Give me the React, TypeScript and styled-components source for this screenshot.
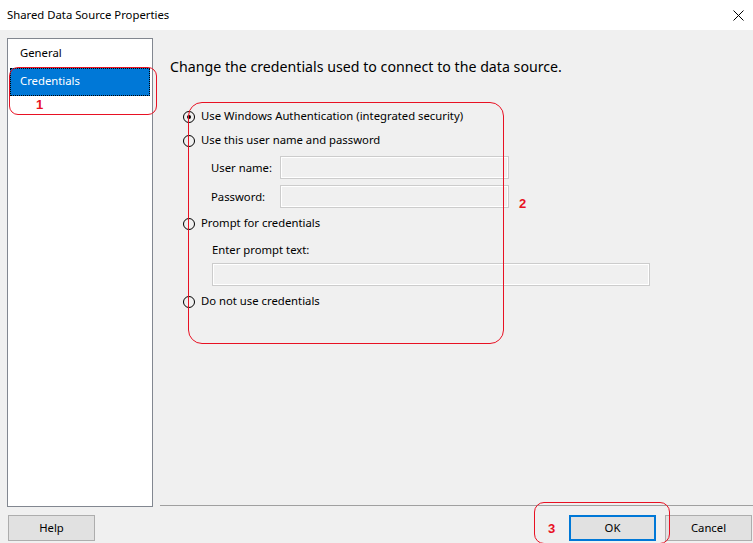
import React from "react";
import styled, { createGlobalStyle } from "styled-components";

const Global = createGlobalStyle`
  html, body { margin: 0; padding: 0; background: #f0f0f0; }
  body { font-family: "Noto Sans", "Open Sans", sans-serif; font-size: 11.3px; color: #000; }
  * { box-sizing: border-box; }
`;

const Window = styled.div`
  position: relative;
  width: 753px;
  height: 543px;
  display: flex;
  flex-direction: column;
  background: #f0f0f0;
  overflow: hidden;
`;

const TitleBar = styled.div`
  height: 30px;
  flex: none;
  background: #fff;
  display: flex;
  align-items: center;
  justify-content: space-between;
  padding: 0 9px 0 7px;
`;

const Title = styled.span`
  font-size: 11.3px;
  line-height: 16px;
`;

const Main = styled.div`
  flex: 1;
  display: flex;
  min-height: 0;
`;

const NavList = styled.ul`
  list-style: none;
  margin: 8px 0 0 7px;
  padding: 1px 2px 0 2px;
  width: 146px;
  height: 469px;
  flex: none;
  background: #fff;
  border: 1px solid #828790;
`;

const NavItem = styled.li<{ $active?: boolean }>`
  height: 28px;
  display: flex;
  align-items: center;
  padding: 0 0 3px 10px;
  font-size: 11.3px;
  color: ${(p) => (p.$active ? "#fff" : "#000")};
  background: ${(p) => (p.$active ? "#0078d7" : "transparent")};
  outline: ${(p) => (p.$active ? "1px dotted #000" : "none")};
  outline-offset: -1px;
`;

const Pane = styled.div`
  flex: 1;
  display: flex;
  flex-direction: column;
  margin-left: 7px;
`;

const Content = styled.div`
  flex: 1;
  padding: 27px 0 0 10px;
`;

const Heading = styled.h1`
  margin: 0;
  font-weight: normal;
  font-size: 14.2px;
  line-height: 20px;
`;

const Options = styled.div`
  display: flex;
  flex-direction: column;
  padding: 27px 0 0 13px;
`;

const RadioRow = styled.label<{ $mt?: number }>`
  display: flex;
  align-items: center;
  height: 24px;
  margin-top: ${(p) => p.$mt ?? 0}px;
  gap: 6px;
`;

const Radio = styled.span<{ $checked?: boolean }>`
  width: 12px;
  height: 12px;
  border-radius: 50%;
  border: 1px solid #000;
  background: #f0f0f0;
  display: flex;
  align-items: center;
  justify-content: center;
  flex: none;
  margin-top: 1px;
  &::after {
    content: "";
    width: 4px;
    height: 4px;
    border-radius: 50%;
    background: ${(p) => (p.$checked ? "#000" : "transparent")};
  }
`;

const RadioText = styled.span`
  padding-bottom: 1px;
`;

const FieldRow = styled.div<{ $mt?: number }>`
  display: flex;
  align-items: center;
  margin-top: ${(p) => p.$mt ?? 0}px;
  padding-left: 28px;
`;

const FieldLabel = styled.span`
  width: 69px;
  flex: none;
`;

const TextBox = styled.div<{ $w: number }>`
  width: ${(p) => p.$w}px;
  height: 23px;
  border: 1px solid #cccccc;
  box-shadow: inset 0 0 0 1px #ffffff;
  background: #f0f0f0;
`;

const PromptLabel = styled.div`
  margin-top: 5px;
  padding-left: 29px;
  line-height: 20px;
`;

const PromptBox = styled.div`
  margin-top: 3px;
  padding-left: 29px;
`;

const Separator = styled.div`
  height: 1px;
  background: #a0a0a0;
  margin-bottom: 1px;
`;

const Footer = styled.div`
  height: 36px;
  flex: none;
  display: flex;
  align-items: flex-start;
  padding: 8px 1px 0 8px;
`;

const Button = styled.button<{ $default?: boolean }>`
  width: 87px;
  height: 26px;
  font-family: inherit;
  font-size: 11.3px;
  color: #000;
  background: #e1e1e1;
  border: ${(p) => (p.$default ? "2px solid #0078d7" : "1px solid #adadad")};
  padding: 0 0 2px;
`;

const Spacer = styled.div`
  flex: 1;
`;

const ButtonGap = styled.div`
  width: 9px;
`;

const Annotation = styled.div<{ $x: number; $y: number; $w: number; $h: number; $r: number }>`
  position: absolute;
  left: ${(p) => p.$x}px;
  top: ${(p) => p.$y}px;
  width: ${(p) => p.$w}px;
  height: ${(p) => p.$h}px;
  border: 1px solid #e81123;
  border-radius: ${(p) => p.$r}px;
  pointer-events: none;
`;

const Marker = styled.span<{ $x: number; $y: number }>`
  position: absolute;
  left: ${(p) => p.$x}px;
  top: ${(p) => p.$y}px;
  color: #e81123;
  font-family: "Liberation Sans", Arial, sans-serif;
  font-weight: bold;
  font-size: 13px;
  line-height: 14px;
`;

const CloseIcon = () => (
  <svg width="11" height="11" viewBox="0 0 11 11">
    <path d="M0.5 0.5 L10.5 10.5 M10.5 0.5 L0.5 10.5" stroke="#000" strokeWidth="1" fill="none" />
  </svg>
);

export default function App() {
  return (
    <>
      <Global />
      <Window>
        <TitleBar>
          <Title>Shared Data Source Properties</Title>
          <CloseIcon />
        </TitleBar>
        <Main>
          <NavList>
            <NavItem>General</NavItem>
            <NavItem $active>Credentials</NavItem>
          </NavList>
          <Pane>
            <Content>
              <Heading>Change the credentials used to connect to the data source.</Heading>
              <Options>
                <RadioRow>
                  <Radio $checked />
                  <RadioText>Use Windows Authentication (integrated security)</RadioText>
                </RadioRow>
                <RadioRow>
                  <Radio />
                  <RadioText>Use this user name and password</RadioText>
                </RadioRow>
                <FieldRow $mt={4}>
                  <FieldLabel>User name:</FieldLabel>
                  <TextBox $w={229} />
                </FieldRow>
                <FieldRow $mt={6}>
                  <FieldLabel>Password:</FieldLabel>
                  <TextBox $w={229} />
                </FieldRow>
                <RadioRow $mt={3}>
                  <Radio />
                  <RadioText>Prompt for credentials</RadioText>
                </RadioRow>
                <PromptLabel>Enter prompt text:</PromptLabel>
                <PromptBox>
                  <TextBox $w={438} />
                </PromptBox>
                <RadioRow $mt={3}>
                  <Radio />
                  <RadioText>Do not use credentials</RadioText>
                </RadioRow>
              </Options>
            </Content>
            <Separator />
          </Pane>
        </Main>
        <Footer>
          <Button>Help</Button>
          <Spacer />
          <Button $default>OK</Button>
          <ButtonGap />
          <Button>Cancel</Button>
        </Footer>
        <Annotation $x={9} $y={67} $w={148} $h={48} $r={9} />
        <Marker $x={36} $y={98}>1</Marker>
        <Annotation $x={188} $y={102} $w={316} $h={242} $r={14} />
        <Marker $x={519} $y={197}>2</Marker>
        <Annotation $x={534} $y={502} $w={136} $h={42} $r={10} />
        <Marker $x={548} $y={522}>3</Marker>
      </Window>
    </>
  );
}
